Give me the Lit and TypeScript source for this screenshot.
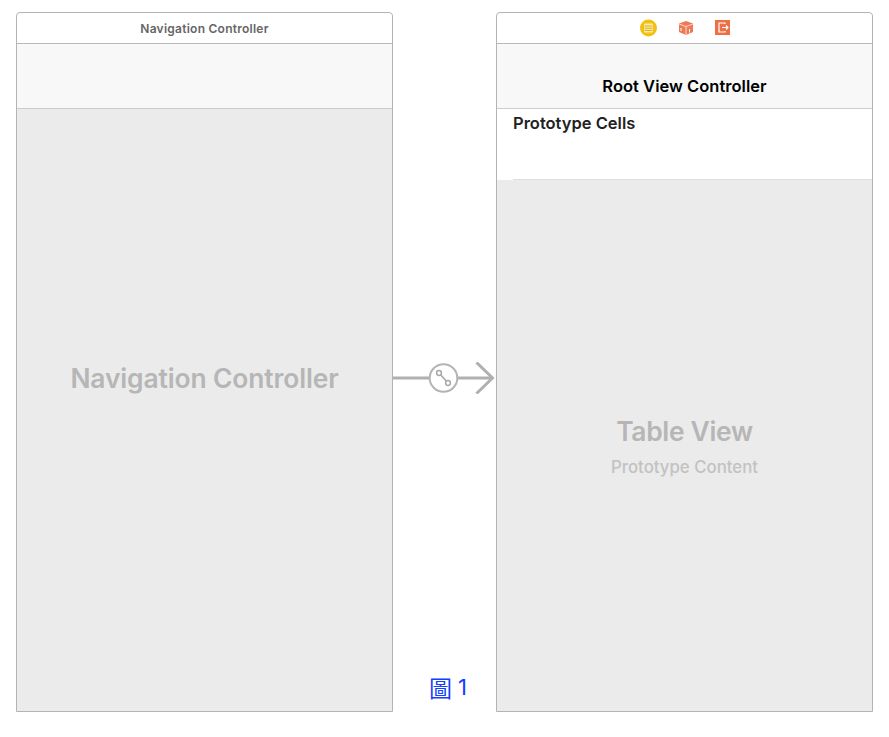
import { LitElement, html, css } from "lit";
import { customElement } from "lit/decorators.js";

@customElement("app-root")
export class AppRoot extends LitElement {
  static styles = css`
    :host { display: block; width: 889px; height: 737px; background: #fff; font-family: Inter, "Noto Sans CJK TC", sans-serif; overflow: hidden; }
    .page { display: grid; grid-template-columns: 377px 103px 377px; padding: 12px 0 0 16px; height: 725px; box-sizing: border-box; }
    .frame { height: 700px; box-sizing: border-box; border: 1px solid #b4b4b4; border-radius: 4px 4px 0 0; display: flex; flex-direction: column; background: #ebebeb; }
    .title { height: 31px; flex: none; box-sizing: border-box; background: #fff; border-bottom: 1px solid #b9b9b9; border-radius: 4px 4px 0 0; display: flex; align-items: center; justify-content: center; font-size: 12px; font-weight: 600; letter-spacing: 0.25px; color: #666; padding-top: 1px; }
    .icons { justify-content: flex-start; padding: 0 0 1px 143px; }
    .icons svg { display: block; flex: none; }
    .i2 { margin-left: 20px; }
    .i3 { margin-left: 21px; }
    .nav { height: 65px; flex: none; box-sizing: border-box; background: #f8f8f8; border-bottom: 1px solid #cdcdcd; display: flex; align-items: flex-end; justify-content: center; font-size: 16.5px; font-weight: 600; letter-spacing: 0.03px; color: #000; padding-bottom: 12px; }
    .center { flex: 1; display: flex; align-items: center; justify-content: center; font-size: 26.4px; font-weight: 600; color: #b6b6b6; padding-bottom: 64px; letter-spacing: -0.12px; }
    .cells { height: 71px; flex: none; background: #fff; box-sizing: border-box; padding: 4px 0 0 16px; font-size: 16.5px; font-weight: 600; color: #222; position: relative; }
    .cells::after { content: ""; position: absolute; left: 16px; right: 0; bottom: 0; height: 1px; background: #dedede; }
    .table { flex: 1; display: flex; flex-direction: column; align-items: center; padding-top: 234px; gap: 9px; }
    .table .h { font-size: 26.4px; font-weight: 600; color: #b6b6b6; line-height: 34px; letter-spacing: -0.3px; }
    .table .s { font-size: 16.8px; font-weight: 550; color: #c2c2c2; line-height: 20px; }
    .mid { display: flex; flex-direction: column; height: 700px; }
    .seg { display: block; margin-top: 350px; flex: none; }
    .caption { margin-top: auto; margin-bottom: 10px; margin-left: 36px; display: flex; align-items: center; gap: 6px; color: #1340ff; font-size: 23px; line-height: 30px; font-family: "Noto Sans CJK TC", sans-serif; font-weight: 400; }
    .caption .n { font-family: Inter, sans-serif; font-weight: 400; font-size: 22px; }
  `;

  render() {
    return html`
      <div class="page">
        <div class="frame left">
          <div class="title">Navigation Controller</div>
          <div class="nav"></div>
          <div class="center">Navigation Controller</div>
        </div>
        <div class="mid">
          <svg class="seg" width="103" height="32" viewBox="0 0 103 32" fill="none">
            <path d="M0 16H37M64 16H99" stroke="#b0b0b0" stroke-width="3"/>
            <path d="M83.5 0.5L99.5 16L83.5 31.5" stroke="#b0b0b0" stroke-width="3"/>
            <circle cx="50.5" cy="16" r="13.8" fill="#fff" stroke="#b4b4b4" stroke-width="2"/>
            <path d="M46 11L55 21" stroke="#a8a8a8" stroke-width="1.6"/>
            <circle cx="46" cy="11" r="2.4" fill="#fff" stroke="#a8a8a8" stroke-width="1.5"/>
            <circle cx="55" cy="21" r="2.4" fill="#fff" stroke="#a8a8a8" stroke-width="1.5"/>
          </svg>
          <div class="caption"><span>圖</span><span class="n">1</span></div>
        </div>
        <div class="frame right">
          <div class="title icons">
            <svg width="18" height="18" viewBox="0 0 18 18"><circle cx="8.5" cy="9" r="8.5" fill="#f2c10f"/><rect x="4" y="4.5" width="9" height="9" rx="1" fill="#fbeeb0"/><path d="M4.5 7h8M4.5 9.2h8M4.5 11.4h8" stroke="#e0ab0a" stroke-width="1"/></svg>
            <svg class="i2" width="16" height="16" viewBox="0 0 16 16"><path d="M8 1L15 3.5V12L8 15L1 12V3.5Z" fill="#ee7a55"/><path d="M1 4L8 6.5L15 4M8 6.5V15" stroke="#fbd9cd" stroke-width="1" fill="none"/><path d="M3 8v3M11.5 9v3.5" stroke="#fff" stroke-width="1"/></svg>
            <svg class="i3" width="15" height="15" viewBox="0 0 15 15"><rect width="15" height="15" fill="#ec7043"/><path d="M10 4V3H4V12H10V11" stroke="#fff" stroke-width="1.2" fill="none"/><path d="M7 7.5H13M11 5.5L13 7.5L11 9.5" stroke="#fff" stroke-width="1.1" fill="none"/></svg>
          </div>
          <div class="nav">Root View Controller</div>
          <div class="cells">Prototype Cells</div>
          <div class="table">
            <div class="h">Table View</div>
            <div class="s">Prototype Content</div>
          </div>
        </div>
      </div>
    `;
  }
}
